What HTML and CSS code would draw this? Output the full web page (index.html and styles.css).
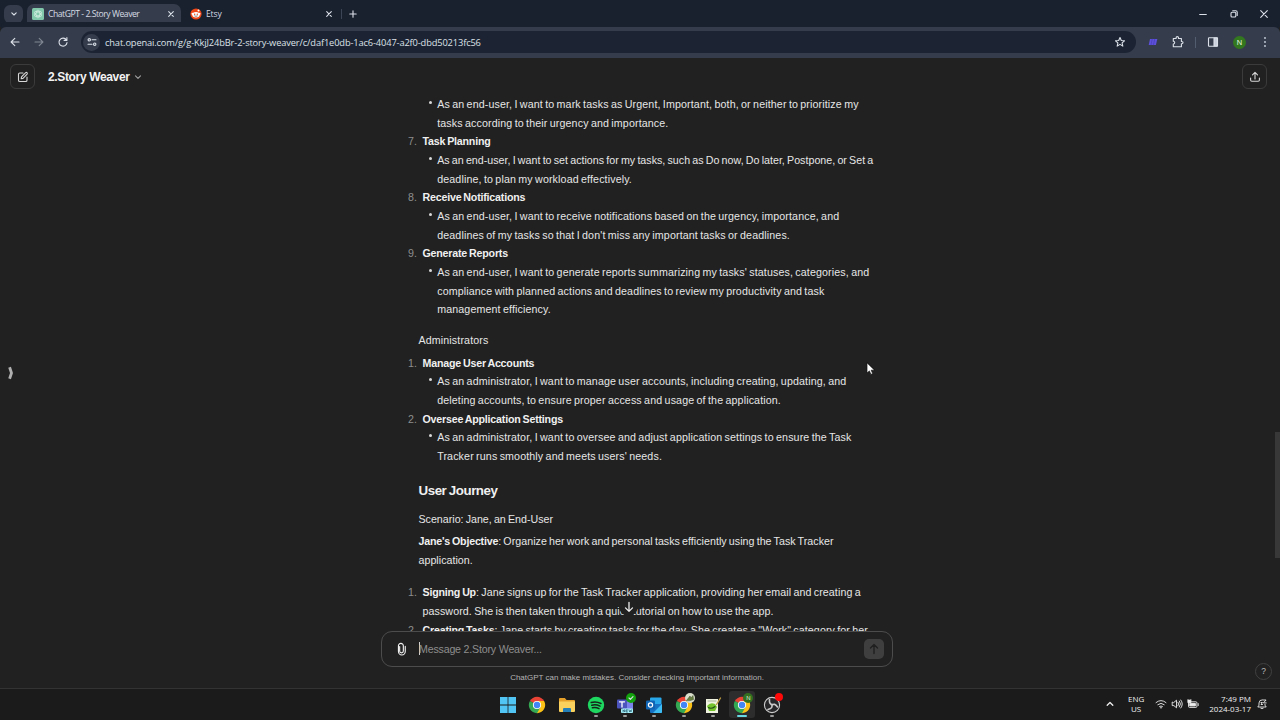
FILE: index.html
```
<!DOCTYPE html>
<html lang="en">
<head>
    <meta charset="UTF-8">
    <meta name="viewport" content="width=device-width, initial-scale=1.0">
    <title>ChatGPT - 2.Story Weaver</title>
    <link rel="stylesheet" href="styles.css">
</head>
<body>
    <!-- Tabs -->
    <div class="tabstrip">
        <div class="tab-search"><svg width="8" height="8" viewBox="0 0 8 8"><path d="M1.8 2.8 4 5l2.2-2.2"/></svg></div>
        <div class="tab active">
            <svg class="favicon" width="12" height="12" viewBox="0 0 12 12"><rect width="12" height="12" rx="1.5" fill="#82c9ac" stroke="none"/><g stroke="#d8f1e6" stroke-width=".6"><ellipse cx="6" cy="6" rx="2" ry="4"/><ellipse cx="6" cy="6" rx="2" ry="4" transform="rotate(60 6 6)"/><ellipse cx="6" cy="6" rx="2" ry="4" transform="rotate(120 6 6)"/></g></svg>
            <span class="tab-title">ChatGPT - 2.Story Weaver</span>
            <svg width="8" height="8" viewBox="0 0 8 8"><path d="m1.7 1.7 4.6 4.6m0-4.6L1.7 6.3"/></svg>
        </div>
        <div class="tab">
            <svg class="favicon" width="12" height="12" viewBox="0 0 12 12"><circle cx="6" cy="6" r="5.6" fill="#f04718" stroke="none"/><circle cx="8.5" cy="2.6" r="1" fill="#fff" stroke="none"/><circle cx="2.6" cy="5.8" r="1.1" fill="#fff" stroke="none"/><circle cx="9.4" cy="5.8" r="1.1" fill="#fff" stroke="none"/><ellipse cx="6" cy="6.8" rx="3.7" ry="2.7" fill="#fff" stroke="none"/><circle cx="4.7" cy="6.2" r=".7" fill="#f04718" stroke="none"/><circle cx="7.3" cy="6.2" r=".7" fill="#f04718" stroke="none"/><path d="M4.7 8q1.3.8 2.6 0" stroke="#333" stroke-width=".6"/></svg>
            <span class="tab-title">Etsy</span>
            <svg width="8" height="8" viewBox="0 0 8 8"><path d="m1.7 1.7 4.6 4.6m0-4.6L1.7 6.3"/></svg>
        </div>
        <span class="tab-line"></span>
        <svg class="new-tab" width="10" height="10" viewBox="0 0 10 10"><path d="M5 1.8v6.4M1.8 5h6.4"/></svg>
        <div class="window-buttons">
            <svg width="10" height="10" viewBox="0 0 10 10"><path d="M1.7 5.5h6.6"/></svg>
            <svg width="10" height="10" viewBox="0 0 10 10"><rect x="2" y="3.2" width="4.8" height="4.8" rx="1"/><path d="M3.7 1.8h3.1q1.4 0 1.4 1.4v3.2"/></svg>
            <svg width="10" height="10" viewBox="0 0 10 10"><path d="m1.7 1.7 6.6 6.6m0-6.6L1.7 8.3"/></svg>
        </div>
    </div>

    <!-- Address bar -->
    <div class="toolbar">
        <div class="nav-buttons">
            <svg width="12" height="12" viewBox="0 0 12 12"><path d="M10 6H2.2m3.6-3.7L2.1 6l3.7 3.7"/></svg>
            <svg class="dim" width="12" height="12" viewBox="0 0 12 12"><path d="M2 6h7.8M6.2 2.3 9.9 6 6.2 9.7"/></svg>
            <svg width="12" height="12" viewBox="0 0 12 12"><path d="M9.4 4A4 4 0 1 0 10 6.6M9.9 1.6v2.8H7.1"/></svg>
        </div>
        <div class="address">
            <span class="site-info"><svg width="12" height="12" viewBox="0 0 12 12"><path d="M6 3.8h4M2 8.2h4"/><circle cx="3.3" cy="3.8" r="1.2"/><circle cx="8.7" cy="8.2" r="1.2"/></svg></span>
            <span class="url">chat.openai.com/g/g-KkjJ24bBr-2-story-weaver/c/daf1e0db-1ac6-4047-a2f0-dbd50213fc56</span>
            <svg width="12" height="12" viewBox="0 0 12 12"><path d="m6 1.5 1.3 3 3.2.3-2.4 2.1.7 3.2L6 8.4l-2.8 1.7.7-3.2-2.4-2.1 3.2-.3z"/></svg>
        </div>
        <svg class="ext" width="10" height="10" viewBox="0 0 10 10"><path d="M2 2h7.3L7.9 8H.7z" fill="#5d50dc" stroke="none"/><path d="M4.2 2.2 3 7.8M6.7 2.2 5.5 7.8" stroke="#443aa9" stroke-width=".6"/></svg>
        <svg class="puzzle" width="14" height="14" viewBox="0 0 14 14"><path d="M2.3 3.5h2.8V2.8a1.2 1.2 0 0 1 2.4 0v.7h2.9v3h.5a1.1 1.1 0 0 1 0 2.2h-.5v3.1H2.3V9a1.4 1.4 0 0 0 0-2.8z"/></svg>
        <span class="tool-line"></span>
        <svg class="panel" width="12" height="12" viewBox="0 0 12 12"><rect x="1.5" y="1.7" width="9" height="8.6" rx=".6"/><path d="M7 2h3.3v8H7z" fill="#c9d0dc"/></svg>
        <span class="avatar">N</span>
        <svg class="more" width="4" height="12" viewBox="0 0 4 12"><g fill="#cdd3de" stroke="none"><circle cx="2" cy="2" r=".9"/><circle cx="2" cy="6" r=".9"/><circle cx="2" cy="10" r=".9"/></g></svg>
    </div>

    <div class="page">
        <header class="chat-header">
            <span class="square-btn"><svg width="12" height="12" viewBox="0 0 12 12"><path d="M6 2H2.8Q1.5 2 1.5 3.3v5.9q0 1.3 1.3 1.3h5.9q1.3 0 1.3-1.3V6M4.2 7.8l.3-2L8.7 1.6q.7-.5 1.3.1t.1 1.4L6 7.4z"/></svg></span>
            <span class="model">2.Story Weaver</span>
            <svg class="chevron" width="8" height="8" viewBox="0 0 8 8"><path d="M1.5 2.8 4 5.3l2.5-2.5"/></svg>
            <span class="square-btn share"><svg width="12" height="12" viewBox="0 0 12 12"><path d="M6 8V1.6M3.5 3.8 6 1.4l2.5 2.4M1.6 7v2q0 1.2 1.2 1.2h6.4q1.2 0 1.2-1.2V7"/></svg></span>
        </header>

        <main class="messages">
            <ol class="stories" start="6">
                <li class="continued">
                    <ul><li>As an end-user, I want to mark tasks as Urgent, Important, both, or neither to prioritize my<br>tasks according to their urgency and importance.</li></ul>
                </li>
                <li><strong>Task Planning</strong>
                    <ul><li><span class="tight">As an end-user, I want to set actions for my tasks, such as Do now, Do later, Postpone, or Set a</span><br>deadline, to plan my workload effectively.</li></ul>
                </li>
                <li><strong>Receive Notifications</strong>
                    <ul><li>As an end-user, I want to receive notifications based on the urgency, importance, and<br>deadlines of my tasks so that I don't miss any important tasks or deadlines.</li></ul>
                </li>
                <li><strong>Generate Reports</strong>
                    <ul><li>As an end-user, I want to generate reports summarizing my tasks' statuses, categories, and<br>compliance with planned actions and deadlines to review my productivity and task<br>management efficiency.</li></ul>
                </li>
            </ol>
            <p class="role">Administrators</p>
            <ol class="stories">
                <li><strong>Manage User Accounts</strong>
                    <ul><li>As an administrator, I want to manage user accounts, including creating, updating, and<br>deleting accounts, to ensure proper access and usage of the application.</li></ul>
                </li>
                <li><strong>Oversee Application Settings</strong>
                    <ul><li>As an administrator, I want to oversee and adjust application settings to ensure the Task<br>Tracker runs smoothly and meets users' needs.</li></ul>
                </li>
            </ol>
            <h3>User Journey</h3>
            <p class="scenario">Scenario: Jane, an End-User</p>
            <p class="objective"><strong>Jane's Objective</strong>: Organize her work and personal tasks efficiently using the Task Tracker<br>application.</p>
            <ol class="stories journey">
                <li><strong>Signing Up</strong>: Jane signs up for the Task Tracker application, providing her email and creating a<br>password. She is then taken through a quick tutorial on how to use the app.</li>
                <li><strong>Creating Tasks</strong>: Jane starts by creating tasks for the day. She creates a "Work" category for her</li>
            </ol>
        </main>

        <div class="scroll-down"><svg width="12" height="12" viewBox="0 0 12 12"><path d="M6 1.3v9M2.5 6.9 6 10.4l3.5-3.5"/></svg></div>

        <footer class="composer-area">
            <div class="composer">
                <svg class="clip" width="12" height="16" viewBox="0 0 12 16"><path d="M3.9 5.2v5.2a2.1 2.1 0 0 0 4.2 0V4.3a2.8 2.8 0 0 0-5.6 0v6.2a3.5 3.9 0 0 0 7.8 0V5"/></svg>
                <span class="caret"></span>
                <span class="placeholder">Message 2.Story Weaver...</span>
                <span class="send"><svg width="14" height="14" viewBox="0 0 14 14"><path d="M7 11.5v-9M3.5 6 7 2.5 10.5 6"/></svg></span>
            </div>
            <p class="notice">ChatGPT can make mistakes. Consider checking important information.</p>
        </footer>

        <svg class="sidebar-handle" width="6" height="14" viewBox="0 0 6 14"><path d="M1.6 1.3 3.5 7l-1.9 5.7"/></svg>
        <span class="scrollbar"></span>
        <span class="help">?</span>
        <svg class="pointer" width="10" height="14" viewBox="0 0 10 14"><path d="M1 1v10l2.4-2.1 1.5 3.5 1.8-.8-1.5-3.4h3.2z"/></svg>
    </div>

    <!-- Windows taskbar -->
    <div class="taskbar">
        <div class="apps">
            <span class="app"><svg width="18" height="18" viewBox="0 0 18 18"><path d="M1 1h7.6v7.6H1zM9.4 1H17v7.6H9.4zM1 9.4h7.6V17H1zM9.4 9.4H17V17H9.4z" fill="#51c5f4" stroke="none"/></svg></span>
            <span class="app"><svg width="18" height="18" viewBox="0 0 18 18"><use href="#chrome"/></svg></span>
            <span class="app"><svg width="18" height="18" viewBox="0 0 18 18"><path d="M1 3q0-1 1-1h4.8l1.8 2H16q1 0 1 1v3H1z" fill="#e6a12a" stroke="none"/><path d="M1 5.5h16V15q0 1-1 1H2q-1 0-1-1z" fill="#fad15c" stroke="none"/><path d="M5 16v-3q0-1 1-1h6q1 0 1 1v3z" fill="#247fb8" stroke="none"/></svg></span>
            <span class="app running"><svg width="18" height="18" viewBox="0 0 18 18"><circle cx="9" cy="9" r="8.2" fill="#1ed760" stroke="none"/><path d="M4.2 6.5q5-1.4 9.8 1M4.8 9.2q4.2-1.1 8.2.9M5.4 11.8q3.5-.8 6.6.8" stroke="#15231a" stroke-width="1.5"/></svg></span>
            <span class="app running"><svg width="18" height="18" viewBox="0 0 18 18"><path d="M7 5h10v7q0 4-4 4H7z" fill="#7b83eb" stroke="none"/><rect x="1" y="3.5" width="10" height="9" rx="1" fill="#4b53bc" stroke="none"/><path d="M3.5 5.8h5M6 5.8V11" stroke="#fff" stroke-width="1.3"/><rect x="5" y="12.5" width="12" height="4.5" rx="1" fill="#a8f0fa" stroke="none"/><path d="M7 16v-2.2L8.5 16v-2.2M11.5 13.8H10V16h1.5M10 14.9h1.2M13 13.8l.6 2.2.7-1.8.7 1.8.6-2.2" stroke="#174d63" stroke-width=".6"/></svg><i class="badge ok"><svg width="8" height="8" viewBox="0 0 8 8"><path d="m2 4 1.4 1.4L6 2.6"/></svg></i></span>
            <span class="app running"><svg width="18" height="18" viewBox="0 0 18 18"><rect x="5" y="1.5" width="11.5" height="13" rx="1" fill="#28a8ea" stroke="none"/><path d="M5 8h12v8q0 1-1 1H6q-1 0-1-1z" fill="#1672c4" stroke="none"/><path d="m17 8-9 9h8q1 0 1-1z" fill="#3cbcf3" stroke="none"/><rect x="1" y="4.5" width="9" height="9" rx="1" fill="#0f64b5" stroke="none"/><circle cx="5.5" cy="9" r="2.1" stroke="#fff" stroke-width="1.2"/></svg></span>
            <span class="app running"><svg width="18" height="18" viewBox="0 0 18 18"><use href="#chrome"/></svg><i class="badge photo"><svg width="10" height="10" viewBox="0 0 10 10"><path d="M1.5 7.5 5 3l1 2 2-2.5.5 4-3 1z" fill="#66813f" stroke="#3c4a2a" stroke-width=".5"/></svg></i></span>
            <span class="app running"><svg width="18" height="18" viewBox="0 0 18 18"><path d="M2 3h12v14H2z" fill="#eef2df" stroke="none"/><path d="M4 5h8" stroke="#a6b199" stroke-width="1"/><path d="M3 10q3-4 8-2l2 3-2 4H5z" fill="#74c32c" stroke="none"/><path d="M4.5 11.5q3 2 6.5-1" stroke="#244d18"/><path d="M12.5 8.5 16.5 2" stroke="#bd9b45" stroke-width="1.4"/></svg></span>
            <span class="app running current"><svg width="18" height="18" viewBox="0 0 18 18"><use href="#chrome"/></svg><i class="badge letter">N</i></span>
            <span class="app running"><svg width="18" height="18" viewBox="0 0 18 18"><circle cx="9" cy="9" r="7.6" fill="#27272a" stroke="#cacaca"/><path d="M9.5 8.5Q6 8.5 6.5 3.5M9 9.5q2.5-3 5.5 1.5M8.5 9q2 3-3.5 4.5" stroke="#c8c8c8" stroke-width="1.6"/></svg><i class="badge rec"></i></span>
        </div>
        <div class="tray">
            <svg class="tray-up" width="8" height="8" viewBox="0 0 8 8"><path d="M1.2 5.3 4 2.5l2.8 2.8"/></svg>
            <span class="lang">ENG<br>US</span>
            <span class="status">
                <svg width="12" height="12" viewBox="0 0 12 12"><path d="M1 4.6q5-4.2 10 0M2.8 6.6q3.2-2.7 6.4 0M4.5 8.5q1.5-1.2 3 0"/><circle cx="6" cy="9.8" r=".8" fill="#eee" stroke="none"/></svg>
                <svg width="12" height="12" viewBox="0 0 12 12"><path d="M1.2 4.4v3.2h1.7l2.6 2.2V2.2L2.9 4.4zM7 4.2q1.3 1.8 0 3.6M8.4 3q2.3 3 0 6M9.8 2q3.1 4 0 8"/></svg>
                <svg width="12" height="12" viewBox="0 0 12 12"><rect x="1.5" y="3.8" width="8.4" height="5.6" rx="1"/><path d="M3 5.4h5.4v2.5H3z" fill="#eee"/><path d="M11.2 5.6v2"/><path d="M.9 1.7v3h3v-3" fill="#eee"/></svg>
            </span>
            <span class="clock">7:49 PM<br>2024-03-17</span>
            <svg class="bell" width="12" height="12" viewBox="0 0 12 12"><path d="M6.5 1.8Q3 1.7 3 5v2.2L1.8 9h8.4L9 7.2v-.8M4.8 10.3q1.2.8 2.4 0M7.3 2h2.8L7.4 4.9h2.8M5 4.5h1.4L5 6.5h1.5"/></svg>
        </div>
    </div>

    <svg class="defs" width="0" height="0">
        <defs>
            <g id="chrome" stroke="none">
                <path d="M9 9 1.9 4.9A8.2 8.2 0 0 1 16.1 4.9L9 9z" fill="#e94335"/>
                <path d="M9 9V4.9h7.1A8.2 8.2 0 0 1 9 17.2z" fill="#fbc116"/>
                <path d="M1.9 4.9 9 9l3.5 2L9 17.2A8.2 8.2 0 0 1 1.9 4.9z" fill="#34a853"/>
                <circle cx="9" cy="9" r="4.1" fill="#fff"/>
                <circle cx="9" cy="9" r="3.2" fill="#4285f4"/>
            </g>
        </defs>
    </svg>
</body>
</html>
```
FILE: styles.css
```
* {
    box-sizing: border-box;
}
body {
    margin: 0;
    width: 1280px;
    height: 720px;
    overflow: hidden;
    display: flex;
    flex-direction: column;
    background: #212121;
    color: #e6e6e6;
    font-family: "Liberation Sans", Arial, sans-serif;
    font-size: 10.67px;
}
svg {
    display: block;
    flex: none;
    fill: none;
    stroke: #dce1e9;
    stroke-width: 1.1;
    stroke-linecap: round;
    stroke-linejoin: round;
}
p, h3, ol, ul {
    margin: 0;
    padding: 0;
}
.defs {
    position: absolute;
}

/* Browser */
.tabstrip {
    height: 27px;
    flex: none;
    display: flex;
    align-items: center;
    padding-left: 4px;
    background: #19202e;
    font-family: "Open Sans", sans-serif;
    font-size: 8.6px;
    color: #d5dae3;
}
.tab-search {
    width: 19px;
    height: 18px;
    border-radius: 6px;
    background: #353d4c;
    display: flex;
    align-items: center;
    justify-content: center;
    margin-right: 4px;
}
.tab {
    width: 157px;
    height: 23px;
    display: flex;
    align-items: center;
    padding: 0 7px 0 6px;
}
.tab.active {
    width: 154px;
    align-self: flex-end;
    padding: 0 6px 3px 5px;
    background: #353d4c;
    border-radius: 7px 7px 0 0;
}
.tab:not(.active) {
    margin-left: 2px;
    padding-left: 7px;
}
.tab-title {
    flex: 1;
    margin-left: 4px;
    letter-spacing: -0.18px;
}
.active .tab-title {
    letter-spacing: -0.45px;
}
.tab-line {
    width: 1px;
    height: 10px;
    margin-left: 1px;
    background: #3c4556;
}
.new-tab {
    margin-left: 6px;
}
.window-buttons {
    margin-left: auto;
    display: flex;
    gap: 20.5px;
    padding-right: 11px;
}
.toolbar {
    height: 31px;
    flex: none;
    display: flex;
    align-items: center;
    padding: 0 13px 1px 9px;
    background: #353d4c;
    border-radius: 6px 6px 0 0;
    box-shadow: 0 -6px 0 -1px #19202e;
}
.nav-buttons {
    display: flex;
    gap: 12px;
}
.dim {
    opacity: 0.45;
}
.address {
    width: 1055px;
    height: 22px;
    margin-left: 12px;
    padding: 0 10px 0 2px;
    display: flex;
    align-items: center;
    border-radius: 11px;
    background: #1c2433;
}
.site-info {
    width: 17px;
    height: 17px;
    display: flex;
    align-items: center;
    justify-content: center;
    border-radius: 50%;
    background: #353d4c;
}
.url {
    flex: 1;
    margin-left: 5px;
    font-family: "Open Sans", sans-serif;
    font-size: 9.3px;
    letter-spacing: -0.14px;
    color: #dce1e8;
}
.ext {
    margin-left: 12px;
}
.puzzle {
    margin-left: 13px;
}
.tool-line {
    width: 1px;
    height: 11px;
    margin-left: 10px;
    background: #525d70;
}
.panel {
    margin-left: 11px;
}
.avatar {
    width: 13px;
    height: 13px;
    margin-left: 14px;
    border-radius: 50%;
    background: #33781e;
    color: #e9f3e5;
    font-size: 7.5px;
    line-height: 13px;
    text-align: center;
}
.more {
    margin-left: auto;
}

/* Chat */
.page {
    position: relative;
    flex: 1;
    min-height: 0;
    display: flex;
    flex-direction: column;
}
.page svg {
    stroke: #d8d8d8;
}
.chat-header {
    height: 37px;
    flex: none;
    display: flex;
    align-items: center;
    padding: 0 13px 0 10px;
}
.square-btn {
    width: 25px;
    height: 25px;
    display: flex;
    align-items: center;
    justify-content: center;
    border: 1px solid #3b3b3b;
    border-radius: 6px;
}
.model {
    margin-left: 13px;
    font-size: 12px;
    font-weight: 700;
    letter-spacing: -0.35px;
    color: #f2f2f2;
}
.chevron {
    margin-left: 4px;
    opacity: 0.7;
}
.share {
    margin-left: auto;
}
.messages {
    flex: 1;
    min-height: 0;
    overflow: hidden;
    width: 500px;
    margin-left: 398.5px;
    padding-left: 20px;
    line-height: 18.67px;
    letter-spacing: 0.13px;
    word-spacing: -0.8px;
    white-space: nowrap;
}
.messages strong {
    font-weight: 700;
    letter-spacing: -0.2px;
    color: #f0f0f0;
}
.tight {
    letter-spacing: 0.02px;
}
.stories {
    padding-left: 4px;
}
.stories > li::marker {
    content: counter(list-item) ".\2002";
    color: #8e8e8e;
}
.stories .continued {
    list-style: none;
}
.stories > .continued::marker {
    content: "";
}
.stories ul {
    list-style: none;
    padding-left: 14.7px;
}
.stories ul li {
    position: relative;
}
.stories ul li::before {
    content: "";
    position: absolute;
    left: -8px;
    top: 6px;
    width: 3px;
    height: 3px;
    border-radius: 50%;
    background: #d8d8d8;
}
.role {
    margin: 12px 0 4px;
}
.messages h3 {
    margin: 14px 0 8.7px;
    font-size: 13.33px;
    line-height: 21.3px;
    font-weight: 700;
    letter-spacing: -0.45px;
    color: #f0f0f0;
}
.scenario {
    letter-spacing: 0;
}
.objective {
    margin-top: 4px;
    letter-spacing: 0.03px;
}
.journey {
    margin-top: 13.4px;
    letter-spacing: 0.09px;
}
.scroll-down {
    position: absolute;
    left: 619px;
    top: 539px;
    width: 19px;
    height: 19px;
    display: flex;
    align-items: center;
    justify-content: center;
    border-radius: 50%;
    background: #212121;
}
.page .scroll-down svg {
    stroke: #eee;
    stroke-width: 1.3;
}
.composer-area {
    height: 57px;
    flex: none;
    display: flex;
    flex-direction: column;
    align-items: center;
    padding-right: 6px;
}
.composer {
    width: 512px;
    height: 36px;
    display: flex;
    align-items: center;
    padding: 0 8px 1px 14px;
    border: 1px solid #4c4c4c;
    border-radius: 11px;
}
.page .clip {
    width: 11px;
    height: 14px;
    stroke: #f0f0f0;
    stroke-width: 1.3;
}
.caret {
    width: 1px;
    height: 13px;
    margin: 0 -1px 0 12px;
    background: #d0d0d0;
}
.placeholder {
    flex: 1;
    letter-spacing: -0.2px;
    color: #8e8e8e;
}
.send {
    width: 20px;
    height: 20px;
    display: flex;
    align-items: center;
    justify-content: center;
    border-radius: 5px;
    background: #3f3f3f;
}
.page .send svg {
    stroke: #202020;
    stroke-width: 1.4;
}
.notice {
    margin-top: 4px;
    font-size: 8px;
    line-height: 13px;
    color: #b4b4b4;
    white-space: nowrap;
}
.sidebar-handle {
    position: absolute;
    left: 8px;
    top: 308px;
}
.page .sidebar-handle path {
    stroke: #b0b0b0;
    stroke-width: 2.8;
    stroke-linecap: butt;
}
.scrollbar {
    position: absolute;
    right: 0;
    top: 374px;
    width: 5px;
    height: 126px;
    background: #383838;
}
.help {
    position: absolute;
    right: 8px;
    top: 605px;
    width: 17px;
    height: 17px;
    border: 1px solid #414141;
    border-radius: 50%;
    color: #bdbdbd;
    font-size: 8.5px;
    line-height: 15px;
    text-align: center;
}
.pointer {
    position: absolute;
    left: 866px;
    top: 304px;
}
.page .pointer path {
    fill: #fff;
    stroke: #111;
    stroke-width: 0.7;
}

/* Taskbar */
.taskbar {
    position: relative;
    height: 32px;
    flex: none;
    display: flex;
    align-items: center;
    background: #1b1b1b;
    border-top: 1px solid #333;
}
.apps {
    display: flex;
    gap: 3.3px;
    margin-left: 495px;
}
.app {
    position: relative;
    width: 26px;
    height: 27px;
    display: flex;
    align-items: center;
    justify-content: center;
    border-radius: 3px;
}
.app.current {
    background: #2d2d2d;
}
.app.running::after {
    content: "";
    position: absolute;
    left: 11px;
    bottom: 1px;
    width: 4px;
    height: 2px;
    border-radius: 1px;
    background: #9a9a9a;
}
.app.current::after {
    left: 8px;
    width: 10px;
    background: #68d8e5;
}
.badge {
    position: absolute;
    right: 2px;
    top: 2px;
    width: 10px;
    height: 10px;
    display: flex;
    align-items: center;
    justify-content: center;
    border-radius: 50%;
    font-style: normal;
}
.badge.ok {
    background: #13a10e;
}
.badge.photo {
    background: #d9dfcb;
}
.badge.letter {
    background: #33701f;
    color: #dbe9d5;
    font-size: 6px;
}
.badge.rec {
    width: 8px;
    height: 8px;
    background: #ff0808;
}
.tray {
    margin-left: auto;
    display: flex;
    align-items: center;
    padding: 0 12px 1px 0;
    font-family: "Open Sans", sans-serif;
    font-size: 8px;
    line-height: 10.5px;
    color: #f0f0f0;
}
.tray svg {
    stroke: #eee;
    stroke-width: 0.9;
}
.tray .tray-up {
    stroke-width: 1.3;
}
.lang {
    margin-left: 14px;
    text-align: center;
}
.status {
    display: flex;
    gap: 4px;
    margin-left: 11px;
}
.clock {
    margin-left: 10px;
    text-align: right;
}
.bell {
    margin-left: 5px;
}
```
